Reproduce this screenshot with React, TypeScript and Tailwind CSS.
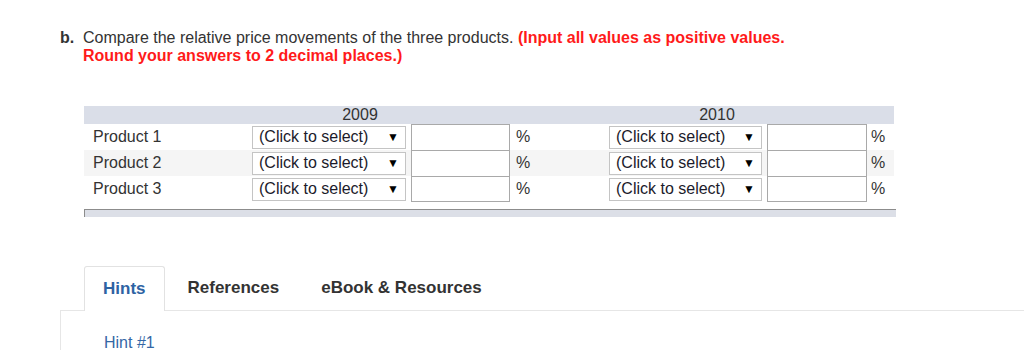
const PRODUCTS = ['Product 1', 'Product 2', 'Product 3']

const SelectBox = ({ width }: { width: string }) => (
  <div
    className={`flex h-[23px] ${width} items-center justify-between border border-[#c4c4c4] bg-white pl-[6px] pr-[6px] text-[16px] text-[#1b1b2b]`}
  >
    <span>(Click to select)</span>
    <span className="text-[12px] leading-none text-black">▼</span>
  </div>
)

const InputBox = ({ width, last }: { width: string; last: boolean }) => (
  <div
    className={`${width} h-[26px] border-x border-t border-[#a9a9a9] bg-white ${last ? 'border-b' : ''}`}
  />
)

export default function App() {
  return (
    <div className="h-[350px] w-[1024px] overflow-hidden bg-white font-['Liberation_Sans',Arial,sans-serif] text-[#333]">
      {/* Question text */}
      <div className="flex pl-[60px] pt-[29px] text-[16px] leading-[18px]">
        <div className="w-[23px] font-bold">b.</div>
        <div>
          Compare the relative price movements of the three products.{' '}
          <span className="font-bold text-[#ff1a1a]">(Input all values as positive values.</span>
          <br />
          <span className="font-bold text-[#ff1a1a]">Round your answers to 2 decimal places.)</span>
        </div>
      </div>

      {/* Table */}
      <div className="ml-[84px] mt-[41px] w-[812px]">
        <div className="flex h-[18px] w-[810px] items-center bg-[#dadee8] text-[16px] leading-[18px]">
          <div className="ml-[168px] w-[216px] text-center">2009</div>
          <div className="ml-[141px] w-[216px] text-center">2010</div>
        </div>

        {PRODUCTS.map((name, i) => (
          <div
            key={name}
            className={`flex h-[26px] w-[810px] items-center text-[16px] ${i === 1 ? 'bg-[#f5f5f5]' : 'bg-white'}`}
          >
            <div className="w-[168px] pl-[9px]">{name}</div>
            <SelectBox width="w-[154px]" />
            <div className="ml-[5px] self-start">
              <InputBox width="w-[99px]" last={i === 2} />
            </div>
            <div className="ml-[6px] w-[93px]">%</div>
            <SelectBox width="w-[153px]" />
            <div className="ml-[5px] self-start">
              <InputBox width="w-[100px]" last={i === 2} />
            </div>
            <div className="ml-[4px]">%</div>
          </div>
        ))}

        <div className="mt-[7px] h-[8px] w-[812px] border-l border-t border-[#8c8c8c] bg-[#dcdfe7]" />
      </div>

      {/* Tabs */}
      <div className="mt-[49px] flex pl-[84px]">
        <div className="relative z-10 -mb-px flex h-[45px] items-center rounded-t-[3px] border border-b-0 border-[#e2e2e2] bg-white px-[18px] text-[17px] font-bold text-[#2e63a3]">
          Hints
        </div>
        <div className="ml-[4px] flex h-[44px] items-center border border-transparent px-[18px] text-[17px] font-bold text-[#333]">
          References
        </div>
        <div className="ml-[4px] flex h-[44px] items-center border border-transparent px-[18px] text-[17px] font-bold text-[#333]">
          eBook &amp; Resources
        </div>
      </div>
      <div className="ml-[60px] h-[60px] border-l border-t border-[#e6e6e6] pl-[43px] pt-[23px]">
        <div className="text-[16px] leading-[18px] text-[#3467a5]">Hint #1</div>
      </div>
    </div>
  )
}
